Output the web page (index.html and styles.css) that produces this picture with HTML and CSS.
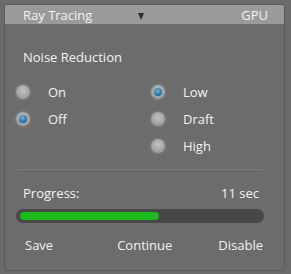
FILE: index.html
```html
<!DOCTYPE html>
<html lang="en">
<head>
  <meta charset="UTF-8">
  <title>Render Settings</title>
  <link rel="stylesheet" href="styles.css">
</head>
<body>
  <div class="panel">
    <!-- Header -->
    <div class="header">
      <span class="mode">Ray Tracing</span>
      <span class="arrow"></span>
      <span class="device">GPU</span>
    </div>

    <div class="content">
      <div class="title">Noise Reduction</div>

      <!-- Options -->
      <div class="options">
        <div class="column">
          <div class="radio"><span class="dot"></span>On</div>
          <div class="radio"><span class="dot checked"></span>Off</div>
        </div>
        <div class="column">
          <div class="radio"><span class="dot checked"></span>Low</div>
          <div class="radio"><span class="dot"></span>Draft</div>
          <div class="radio"><span class="dot"></span>High</div>
        </div>
      </div>

      <div class="separator"></div>

      <!-- Progress -->
      <div class="progress-row">
        <span>Progress:</span>
        <span>11 sec</span>
      </div>
      <div class="progress-bar">
        <div class="progress-fill" style="width: 58%"></div>
      </div>

      <!-- Actions -->
      <div class="actions">
        <span class="save">Save</span>
        <span class="continue">Continue</span>
        <span class="disable">Disable</span>
      </div>
    </div>
  </div>
</body>
</html>
```

FILE: styles.css
```css
body {
  margin: 0;
  padding: 4px 0 0 4px;
  width: 291px;
  height: 274px;
  box-sizing: border-box;
  background: #6b6b6b;
  font-family: "Open Sans", sans-serif;
  font-size: 13px;
  color: #f2f2f2;
  overflow: hidden;
}
.panel {
  width: 281px;
  height: 267px;
  box-sizing: border-box;
  border: 1px solid #5a5a5a;
  border-radius: 3px;
  background: #6c6c6c;
}
.header {
  display: flex;
  align-items: center;
  height: 19px;
  padding: 0 16px 0 18px;
  background: #9a9a9a;
  border-radius: 2px 2px 0 0;
}
.mode {
  width: 115px;
}
.arrow {
  width: 0;
  height: 0;
  margin-top: 3px;
  border-left: 3.5px solid transparent;
  border-right: 3.5px solid transparent;
  border-top: 7px solid #2e2e2e;
}
.device {
  margin-left: auto;
}
.content {
  padding: 0 19px 0 11px;
}
.title {
  margin-top: 23px;
  padding-left: 7px;
  height: 20px;
  line-height: 20px;
}
.options {
  display: flex;
  margin-top: 16px;
}
.column {
  flex: none;
  width: 135px;
  display: flex;
  flex-direction: column;
  gap: 9px;
}
.radio {
  display: flex;
  align-items: center;
  height: 18px;
}
.dot {
  width: 14px;
  height: 14px;
  border-radius: 50%;
  margin-right: 18px;
  background: radial-gradient(circle at 50% 40%, #c4c4c4, #9c9c9c 70%);
  box-shadow: 0 0 2px 1px #808080;
  display: flex;
  align-items: center;
  justify-content: center;
}
.dot.checked::after {
  content: "";
  width: 8px;
  height: 8px;
  border-radius: 50%;
  background: radial-gradient(circle at 45% 35%, #6fb6e0, #1f6a9a 70%);
}
.separator {
  margin: 14px 0 0 1px;
  height: 1px;
  background: #7c7c7c;
  width: 246px;
}
.progress-row {
  display: flex;
  justify-content: space-between;
  padding: 0 6px 0 7px;
  margin-top: 13px;
  height: 20px;
  line-height: 20px;
}
.progress-bar {
  margin-top: 6px;
  height: 14px;
  border-radius: 7px;
  background: #484848;
  padding: 3px 4px;
  box-sizing: border-box;
  width: 248px;
}
.progress-fill {
  height: 8px;
  border-radius: 4px;
  background: #1cbb1c;
}
.actions {
  display: flex;
  padding: 0 2px 0 9px;
  margin-top: 12px;
  height: 20px;
  line-height: 20px;
}
.continue {
  margin-left: 64px;
}
.disable {
  margin-left: auto;
}
```
